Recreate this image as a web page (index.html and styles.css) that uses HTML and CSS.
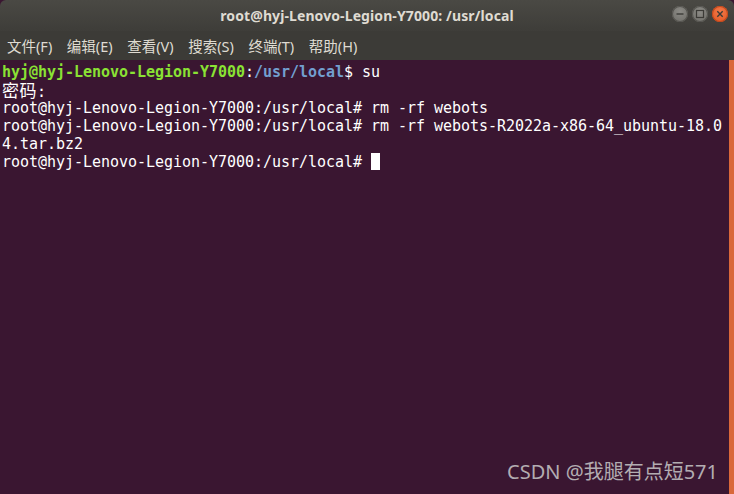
FILE: index.html
```html
<!DOCTYPE html>
<html lang="zh-CN">
<head>
  <meta charset="UTF-8">
  <meta name="viewport" content="width=device-width, initial-scale=1.0">
  <link rel="stylesheet" href="styles.css">
</head>
<body>
  <div class="window">
    <div class="titlebar">
      <div class="title">root@hyj-Lenovo-Legion-Y7000: /usr/local</div>
      <div class="controls">
        <span class="btn btn-min">
          <svg width="16" height="16" viewBox="0 0 16 16"><line x1="4.5" y1="8" x2="11.5" y2="8" stroke="#3c3b37" stroke-width="1.4"/></svg>
        </span>
        <span class="btn btn-max">
          <svg width="16" height="16" viewBox="0 0 16 16"><rect x="4.5" y="4.5" width="7" height="7" fill="none" stroke="#3c3b37" stroke-width="1.2"/></svg>
        </span>
        <span class="btn btn-close">
          <svg width="16" height="16" viewBox="0 0 16 16"><path d="M5.3 5.3 L10.7 10.7 M10.7 5.3 L5.3 10.7" stroke="#3c3b37" stroke-width="1.4"/></svg>
        </span>
      </div>
    </div>
    <div class="menubar">
      <span class="menu">文件(F)</span>
      <span class="menu">编辑(E)</span>
      <span class="menu">查看(V)</span>
      <span class="menu">搜索(S)</span>
      <span class="menu">终端(T)</span>
      <span class="menu">帮助(H)</span>
    </div>
    <div class="terminal">
      <div class="screen">
<div class="line"><span class="user">hyj@hyj-Lenovo-Legion-Y7000</span>:<span class="path">/usr/local</span>$ su</div>
<div class="line"><span class="cjk">密码</span>:</div>
<div class="line">root@hyj-Lenovo-Legion-Y7000:/usr/local# rm -rf webots</div>
<div class="line">root@hyj-Lenovo-Legion-Y7000:/usr/local# rm -rf webots-R2022a-x86-64_ubuntu-18.0</div>
<div class="line">4.tar.bz2</div>
<div class="line">root@hyj-Lenovo-Legion-Y7000:/usr/local# <span class="cursor"></span></div>
      </div>
      <div class="edge"></div>
      <div class="watermark">CSDN @我腿有点短571</div>
    </div>
  </div>
</body>
</html>
```

FILE: styles.css
```css
body {
  margin: 0;
  overflow: hidden;
  background: #3a1631;
}

.window {
  width: 734px;
  height: 494px;
  display: flex;
  flex-direction: column;
  font-family: "Noto Sans", "Noto Sans CJK SC", sans-serif;
}

.titlebar {
  height: 31px;
  display: flex;
  align-items: center;
  justify-content: center;
  position: relative;
  background: linear-gradient(#4a4944, #3e3d39);
  border-radius: 6px 6px 0 0;
}

.title {
  color: #dfdbd2;
  font-weight: bold;
  font-size: 14px;
  letter-spacing: 0.1px;
}

.controls {
  position: absolute;
  right: 6px;
  top: 6px;
  display: flex;
  gap: 4px;
}

.btn {
  width: 16px;
  height: 16px;
  border-radius: 50%;
  display: flex;
}

.btn-min,
.btn-max {
  background: radial-gradient(circle at 50% 35%, #8c8b86, #6c6b66);
  box-shadow: inset 0 0 0 1px #55544f;
}

.btn-close {
  background: radial-gradient(circle at 50% 35%, #f47a4a, #e0531f);
  box-shadow: inset 0 0 0 1px #c2481c;
}

.menubar {
  height: 29px;
  display: flex;
  align-items: center;
  gap: 14.6px;
  padding-left: 7px;
  background: #3c3b37;
}

.menu {
  color: #dfdbd2;
  font-size: 14.5px;
}

.terminal {
  flex: 1;
  display: flex;
  position: relative;
  background: #3a1631;
}

.screen {
  flex: 1;
  padding: 3px 0 0 2px;
  font-family: "DejaVu Sans Mono", "Noto Sans CJK SC", monospace;
  font-size: 15px;
  letter-spacing: -0.03px;
  color: #ffffff;
}

.line {
  height: 18px;
  line-height: 18px;
  white-space: pre;
}

.cjk {
  font-family: "Noto Sans CJK SC", sans-serif;
  font-size: 17px;
  letter-spacing: 0.5px;
}

.user {
  color: #8ae234;
  font-weight: bold;
}

.path {
  color: #729fcf;
  font-weight: bold;
}

.cursor {
  display: inline-block;
  width: 9px;
  height: 17px;
  background: #ffffff;
  vertical-align: -3px;
}

.edge {
  width: 5px;
  background: #d9683a;
}

.watermark {
  position: absolute;
  right: 16px;
  bottom: 9px;
  font-size: 20px;
  color: #b3adb1;
}
```
